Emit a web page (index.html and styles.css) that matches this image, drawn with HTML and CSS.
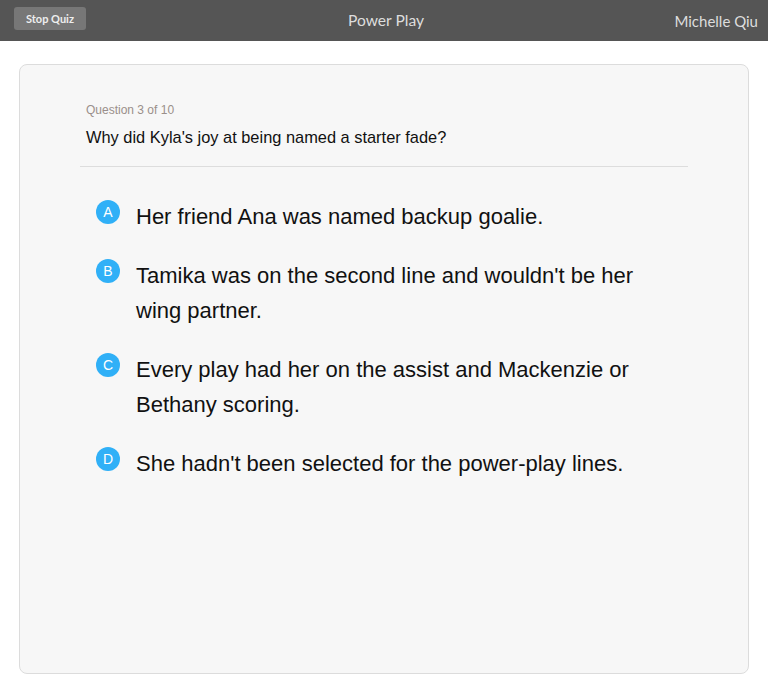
FILE: index.html
```html
<!DOCTYPE html>
<html>
<head>
<meta charset="utf-8">
<link rel="stylesheet" href="styles.css">
</head>
<body>
<header class="topbar">
  <button class="stop-btn">Stop Quiz</button>
  <div class="title">Power Play</div>
  <div class="user">Michelle Qiu</div>
</header>
<main class="page">
  <section class="card">
    <div class="question-head">
      <div class="q-count">Question 3 of 10</div>
      <div class="q-text">Why did Kyla's joy at being named a starter fade?</div>
    </div>
    <ul class="options">
      <li class="option"><span class="badge">A</span><span class="opt-text">Her friend Ana was named backup goalie.</span></li>
      <li class="option"><span class="badge">B</span><span class="opt-text">Tamika was on the second line and wouldn't be her wing partner.</span></li>
      <li class="option"><span class="badge">C</span><span class="opt-text">Every play had her on the assist and Mackenzie or Bethany scoring.</span></li>
      <li class="option"><span class="badge">D</span><span class="opt-text">She hadn't been selected for the power-play lines.</span></li>
    </ul>
  </section>
</main>
</body>
</html>
```

FILE: styles.css
```css
html, body {
  margin: 0;
  padding: 0;
  background: #ffffff;
}
body {
  font-family: "Liberation Sans", Arial, sans-serif;
}
.topbar {
  height: 41px;
  background: #555555;
  display: grid;
  grid-template-columns: 1fr auto 1fr;
  align-items: center;
  padding: 0 10px 0 14px;
  box-sizing: border-box;
  font-family: "Lato", "Open Sans", sans-serif;
  color: #dddddd;
}
.stop-btn {
  justify-self: start;
  width: 72px;
  height: 23px;
  margin-top: -5px;
  background: #777777;
  color: #eeeeee;
  border: none;
  border-radius: 3px;
  font-family: "Lato", sans-serif;
  font-weight: bold;
  font-size: 11px;
  padding: 0;
}
.title {
  font-size: 15.6px;
  margin-top: -1px;
}
.user {
  justify-self: end;
  font-size: 15px;
}
.page {
  padding: 23px 19px 0 19px;
}
.card {
  height: 610px;
  box-sizing: border-box;
  background: #f7f7f7;
  border: 1px solid #dcdcdc;
  border-radius: 8px;
  padding: 38px 60px 0 60px;
}
.question-head {
  padding: 0 6px 20px 6px;
  border-bottom: 1px solid #dddddd;
}
.q-count {
  font-size: 12px;
  color: #9a8f8a;
  line-height: 14px;
}
.q-text {
  font-size: 16.4px;
  color: #111111;
  margin-top: 11px;
  line-height: 18px;
}
.options {
  list-style: none;
  margin: 0;
  padding: 32px 0 0 16px;
  display: flex;
  flex-direction: column;
  gap: 24px;
}
.option {
  display: flex;
  align-items: flex-start;
  gap: 16px;
}
.badge {
  flex: none;
  width: 24px;
  height: 24px;
  border-radius: 50%;
  background: #30b0f7;
  color: #ffffff;
  font-size: 14px;
  line-height: 24px;
  text-align: center;
  margin-top: 1px;
}
.opt-text {
  font-size: 22px;
  line-height: 35px;
  color: #111111;
  max-width: 510px;
}
```
